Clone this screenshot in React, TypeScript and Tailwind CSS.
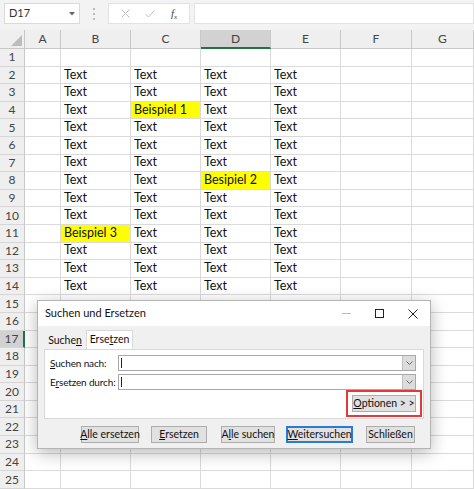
import React from 'react';

const COLS = [
  { key: 'A', w: 'w-[36px]' },
  { key: 'B', w: 'w-[70px]' },
  { key: 'C', w: 'w-[70px]' },
  { key: 'D', w: 'w-[70px]' },
  { key: 'E', w: 'w-[70px]' },
  { key: 'F', w: 'w-[71px]' },
  { key: 'G', w: 'flex-1' },
];

const highlights: Record<string, string> = {
  C4: 'Beispiel 1',
  D8: 'Besipiel 2',
  B11: 'Beispiel 3',
};

function cellValue(col: string, row: number): { text: string; yellow: boolean } {
  const id = `${col}${row}`;
  if (highlights[id]) return { text: highlights[id], yellow: true };
  if (row >= 2 && row <= 14 && ['B', 'C', 'D', 'E'].includes(col)) return { text: 'Text', yellow: false };
  return { text: '', yellow: false };
}

function DialogButton({ children, primary, className = '' }: { children: React.ReactNode; primary?: boolean; className?: string }) {
  return (
    <div
      className={`h-[17px] flex items-center justify-center bg-[#e1e1e1] text-[10.5px] text-[#111] whitespace-nowrap ${
        primary ? 'border-2 border-[#2a7bd4]' : 'border border-[#adadad]'
      } ${className}`}
    >
      <span>{children}</span>
    </div>
  );
}

function Dropdown() {
  return (
    <div className="flex-1 h-[16px] bg-white border border-[#a8a8a8] flex items-center justify-between">
      <span className="ml-[2px] w-px h-[10px] bg-[#222]" />
      <div className="w-[13px] h-full bg-[#dcdcdc] border-l border-[#c0c0c0] flex items-center justify-center">
        <svg width="7" height="4" viewBox="0 0 7 4">
          <path d="M0.5 0.5 L3.5 3.5 L6.5 0.5" fill="none" stroke="#666" strokeWidth="1" />
        </svg>
      </div>
    </div>
  );
}

function Dialog() {
  return (
    <div
      className="absolute left-[37px] top-[300px] w-[394px] h-[149px] bg-[#f0f0f0] border border-[#b4b4b4] shadow-[0_4px_16px_rgba(0,0,0,0.28)] flex flex-col"
      style={{ fontFamily: 'Lato, "Noto Sans", sans-serif' }}
    >
      <div className="h-[25px] bg-white flex items-center justify-between pl-[7px] pr-[12px] text-[11px] text-[#111]">
        <span>Suchen und Ersetzen</span>
        <div className="flex items-center gap-[24px]">
          <span className="w-[9px] h-px bg-[#bbb]" />
          <span className="w-[9px] h-[9px] border border-[#222]" />
          <svg width="10" height="10" viewBox="0 0 10 10">
            <path d="M0.5 0.5 L9.5 9.5 M9.5 0.5 L0.5 9.5" stroke="#222" strokeWidth="1" />
          </svg>
        </div>
      </div>
      <div className="px-[6px] pt-[4px] flex flex-col">
        <div className="flex items-end h-[19px] text-[10.5px] text-[#111] whitespace-nowrap">
          <div className="w-[42px] h-[17px] flex items-center justify-center">
            <span>
              Suche<span className="underline">n</span>
            </span>
          </div>
          <div className="w-[47px] h-[19px] bg-white border border-b-0 border-[#d9d9d9] flex items-center justify-center">
            <span>
              Erse<span className="underline">t</span>zen
            </span>
          </div>
        </div>
        <div className="h-[70px] bg-white border border-[#d9d9d9] flex flex-col pl-[5px] pr-[7px] pt-[5px] text-[10px] tracking-[-0.15px] text-[#111] whitespace-nowrap">
          <div className="flex items-center h-[16px]">
            <span className="w-[68px] shrink-0">
              <span className="underline">S</span>uchen nach:
            </span>
            <Dropdown />
          </div>
          <div className="flex items-center h-[16px] mt-[3px]">
            <span className="w-[68px] shrink-0">
              E<span className="underline">r</span>setzen durch:
            </span>
            <Dropdown />
          </div>
          <div className="flex justify-end mt-0 mr-[-6px] tracking-normal">
            <div className="border-2 border-[#e5383b] px-[4px] py-[3px]">
              <DialogButton className="w-[64px]">
                <span className="underline">O</span>ptionen &gt; &gt;
              </DialogButton>
            </div>
          </div>
        </div>
      </div>
      <div className="flex items-center mt-[7px] pl-[43px]">
        <DialogButton className="w-[58px]">
          <span className="underline">A</span>lle ersetzen
        </DialogButton>
        <DialogButton className="w-[56px] ml-[12px]">
          <span className="underline">E</span>rsetzen
        </DialogButton>
        <DialogButton className="w-[54px] ml-[14px]">
          A<span className="underline">l</span>le suchen
        </DialogButton>
        <DialogButton primary className="w-[67px] ml-[11px]">
          <span className="underline">W</span>eitersuchen
        </DialogButton>
        <DialogButton className="w-[49px] ml-[13px]">Schließen</DialogButton>
      </div>
    </div>
  );
}

export default function App() {
  const rows = Array.from({ length: 25 }, (_, i) => i + 1);
  return (
    <div
      className="relative w-[474px] h-[489px] overflow-hidden bg-white"
      style={{ fontFamily: 'Lato, "Open Sans", sans-serif' }}
    >
      {/* formula bar */}
      <div className="h-[30px] bg-[#f3f3f3] flex items-start pt-[3px] pl-[4px] gap-[4px]">
        <div className="w-[76px] h-[21px] bg-white border border-[#dadada] flex items-center justify-between px-[4px] text-[11px] text-[#333]">
          <span>D17</span>
          <svg width="6" height="4" viewBox="0 0 6 4">
            <path d="M0 0 L6 0 L3 3.5 Z" fill="#666" />
          </svg>
        </div>
        <div className="w-[20px] h-[21px] flex flex-col items-center justify-center gap-[3px]">
          <span className="w-[2px] h-[2px] bg-[#bbb]" />
          <span className="w-[2px] h-[2px] bg-[#bbb]" />
          <span className="w-[2px] h-[2px] bg-[#bbb]" />
        </div>
        <div className="w-[82px] h-[21px] bg-white border border-[#e2e2e2] flex items-center justify-around px-[4px]">
          <svg width="9" height="9" viewBox="0 0 9 9">
            <path d="M0.5 0.5 L8.5 8.5 M8.5 0.5 L0.5 8.5" stroke="#bbb" strokeWidth="1" />
          </svg>
          <svg width="10" height="8" viewBox="0 0 10 8">
            <path d="M0.5 4 L3.5 7 L9.5 0.5" fill="none" stroke="#bbb" strokeWidth="1" />
          </svg>
          <span className="italic text-[11px] text-[#444]" style={{ fontFamily: '"Liberation Serif", serif' }}>
            f<sub className="text-[7px]">x</sub>
          </span>
        </div>
        <div className="flex-1 h-[21px] bg-white border border-[#e2e2e2]" />
      </div>

      {/* column headers */}
      <div className="flex h-[19px] bg-[#efefef] text-[12px] text-[#444]">
        <div className="w-[25px] border-r border-b border-[#c8c8c8] flex items-end justify-end p-[2px]">
          <svg width="11" height="11" viewBox="0 0 11 11">
            <path d="M11 0 L11 11 L0 11 Z" fill="#bdbdbd" />
          </svg>
        </div>
        {COLS.map((c) => (
          <div
            key={c.key}
            className={`${c.w} flex items-center justify-center border-r border-[#c8c8c8] ${
              c.key === 'D' ? 'bg-[#d2d2d2] border-b-2 border-b-[#217346]' : 'border-b border-b-[#c8c8c8]'
            }`}
          >
            {c.key}
          </div>
        ))}
      </div>

      {/* rows */}
      {rows.map((r) => (
        <div key={r} className="flex h-[17.6px] text-[12.5px] text-[#111]">
          <div
            className={`w-[25px] flex items-center justify-center text-[12px] text-[#444] border-b border-[#d6d6d6] ${
              r === 17 ? 'bg-[#d2d2d2] border-r-2 border-r-[#217346]' : 'bg-[#efefef] border-r border-r-[#c8c8c8]'
            }`}
          >
            {r}
          </div>
          {COLS.map((c) => {
            const v = cellValue(c.key, r);
            return (
              <div
                key={c.key}
                className={`${c.w} flex items-center pl-[3px] border-r border-b border-[#dadada] whitespace-nowrap overflow-hidden ${
                  v.yellow ? 'bg-[#ffff00]' : ''
                }`}
              >
                {v.text}
              </div>
            );
          })}
        </div>
      ))}

      <Dialog />
    </div>
  );
}
